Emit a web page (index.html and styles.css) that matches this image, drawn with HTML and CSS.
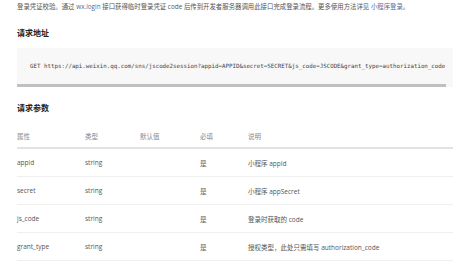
FILE: index.html
```html
<!DOCTYPE html>
<html lang="zh-CN">
<head>
  <meta charset="UTF-8" />
  <meta name="viewport" content="width=device-width, initial-scale=1.0" />
  <title>code2Session</title>
  <link rel="stylesheet" href="styles.css">
</head>
<body>
  <div class="doc">
    <p class="intro">登录凭证校验。通过 <a href="#">wx.login</a> 接口获得临时登录凭证 code 后传到开发者服务器调用此接口完成登录流程。更多使用方法详见 <a href="#">小程序登录</a>。</p>

    <h3>请求地址</h3>
    <div class="code-block">
      <pre class="code"><code>GET https://api.weixin.qq.com/sns/jscode2session?appid=APPID&amp;secret=SECRET&amp;js_code=JSCODE&amp;grant_type=authorization_code</code></pre>
      <div class="code-scroll"><div class="code-thumb"></div></div>
    </div>

    <h3>请求参数</h3>
    <table class="params">
      <thead>
        <tr>
          <th class="col-name">属性</th>
          <th class="col-type">类型</th>
          <th class="col-default">默认值</th>
          <th class="col-required">必填</th>
          <th>说明</th>
        </tr>
      </thead>
      <tbody>
        <tr>
          <td>appid</td>
          <td>string</td>
          <td></td>
          <td>是</td>
          <td>小程序 appId</td>
        </tr>
        <tr>
          <td>secret</td>
          <td>string</td>
          <td></td>
          <td>是</td>
          <td>小程序 appSecret</td>
        </tr>
        <tr>
          <td>js_code</td>
          <td>string</td>
          <td></td>
          <td>是</td>
          <td>登录时获取的 code</td>
        </tr>
        <tr>
          <td>grant_type</td>
          <td>string</td>
          <td></td>
          <td>是</td>
          <td>授权类型，此处只需填写 authorization_code</td>
        </tr>
      </tbody>
    </table>
  </div>
</body>
</html>
```

FILE: styles.css
```css
body {
  margin: 0;
  padding: 0;
  background-color: #fff;
  font-family: "Open Sans", "Noto Sans CJK SC", sans-serif;
  color: #444;
}

.doc {
  width: 436px;
  padding-left: 17px;
}

.intro {
  margin: 0;
  padding-top: 2px;
  font-size: 6.4px;
  line-height: 9px;
  color: #555;
}

.intro a {
  color: #576b95;
  text-decoration: none;
}

h3 {
  margin: 0;
  font-size: 8px;
  line-height: 10px;
  font-weight: 700;
  color: #222;
}

.doc h3:nth-of-type(1) {
  margin-top: 17px;
}

.doc h3:nth-of-type(2) {
  margin-top: 16px;
}

.code-block {
  margin-top: 10px;
  background-color: #f8f8f8;
}

.code {
  margin: 0;
  padding: 14px 0 14px 13px;
  font-family: "DejaVu Sans Mono", monospace;
  font-size: 5.8px;
  line-height: 8px;
  color: #444;
  overflow: hidden;
  white-space: pre;
}

.code-scroll {
  height: 3px;
}

.code-thumb {
  height: 100%;
  margin-right: 7px;
  background-color: #c0c0c0;
}

.params {
  margin-top: 11px;
  width: 436px;
  border-collapse: collapse;
  font-size: 6.5px;
}

.params th,
.params td {
  padding: 0;
  text-align: left;
  vertical-align: middle;
}

.params th {
  height: 23px;
  font-weight: 400;
  color: #888;
  border-bottom: 2px solid #e2e2e2;
}

.params td {
  height: 27px;
  color: #555;
  border-bottom: 1px solid #efefef;
}

.col-name { width: 68px; }
.col-type { width: 55px; }
.col-default { width: 60px; }
.col-required { width: 48px; }
```
